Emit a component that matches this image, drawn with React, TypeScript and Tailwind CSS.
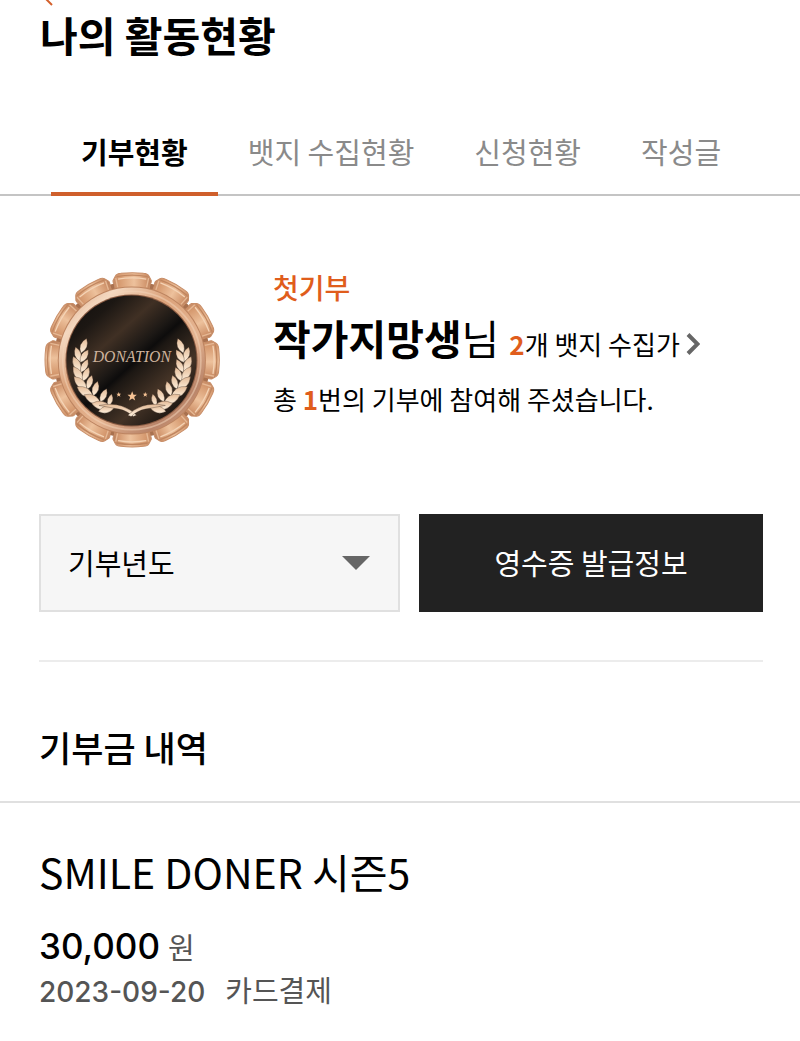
import React from "react";

const LOBES = [0, 30, 60, 90, 120, 150, 180, 210, 240, 270, 300, 330];

type Leaf = [number, number, number, number];

/* base x, base y, tip x, tip y */
const LEAVES: Leaf[] = [
  [154, 280, 171, 236],
  [152, 306, 138, 262],
  [152, 308, 176, 270],
  [153, 336, 131, 290],
  [154, 338, 175, 298],
  [160, 364, 131, 320],
  [160, 364, 178, 322],
  [173, 390, 133, 350],
  [173, 388, 187, 346],
  [192, 411, 142, 380],
  [191, 408, 204, 364],
  [214, 430, 164, 404],
  [212, 426, 231, 386],
  [244, 442, 186, 430],
  [236, 438, 246, 402],
  [254, 442, 206, 454],
];

function LeafShape({ leaf }: { leaf: Leaf }) {
  const [bx, by, tx, ty] = leaf;
  const dx = tx - bx;
  const dy = ty - by;
  const nx = -dy * 0.42;
  const ny = dx * 0.42;
  const mx = bx + dx * 0.5;
  const my = by + dy * 0.5;
  return <path d={`M${bx} ${by} Q${mx + nx} ${my + ny} ${tx} ${ty} Q${mx - nx} ${my - ny} ${bx} ${by}Z`} />;
}

function Laurel() {
  return (
    <g fill="url(#leaf)" stroke="#3a2b20" strokeWidth="1">
      {LEAVES.map((leaf, i) => (
        <LeafShape key={i} leaf={leaf} />
      ))}
      <path d="M208 436 Q250 428 276 438 Q302 447 320 465 L310 469 Q292 452 268 447 Q240 442 208 436Z" />
    </g>
  );
}

function DonationBadge() {
  return (
    <svg viewBox="44 38 525 525" className="size-44 shrink-0" role="img" aria-label="DONATION">
      <defs>
        <linearGradient id="lobe" x1="0" y1="0" x2="1" y2="0">
          <stop offset="0" stopColor="#c58b66" />
          <stop offset="0.16" stopColor="#d69a70" />
          <stop offset="0.55" stopColor="#edc19c" />
          <stop offset="0.85" stopColor="#d39870" />
          <stop offset="1" stopColor="#b97f5c" />
        </linearGradient>
        <linearGradient id="ring" x1="0" y1="0" x2="0.9" y2="1">
          <stop offset="0" stopColor="#d79c76" />
          <stop offset="0.2" stopColor="#f4d8c0" />
          <stop offset="0.4" stopColor="#dba27a" />
          <stop offset="0.65" stopColor="#e5b491" />
          <stop offset="0.85" stopColor="#b98469" />
          <stop offset="1" stopColor="#d9a582" />
        </linearGradient>
        <linearGradient id="disc" x1="0.1" y1="0.1" x2="0.85" y2="0.95">
          <stop offset="0" stopColor="#16120f" />
          <stop offset="0.12" stopColor="#1c1713" />
          <stop offset="0.3" stopColor="#403024" />
          <stop offset="0.46" stopColor="#1c1815" />
          <stop offset="0.52" stopColor="#0d0c0c" />
          <stop offset="0.56" stopColor="#1c1713" />
          <stop offset="0.76" stopColor="#443326" />
          <stop offset="1" stopColor="#15110f" />
        </linearGradient>
        <linearGradient id="leaf" x1="0" y1="0" x2="0" y2="1">
          <stop offset="0" stopColor="#e4bb97" />
          <stop offset="1" stopColor="#fff1de" />
        </linearGradient>
      </defs>
      <circle cx="307" cy="300" r="234" fill="#a9714f" />
      <g transform="translate(307 300)">
        {LOBES.map((angle) => (
          <g key={angle} transform={`rotate(${angle})`}>
            <path
              d="M-50 -250 Q-46 -257 -34 -258 Q0 -262 34 -258 Q46 -257 50 -250 L57 -237 Q58 -230 53 -224 L49 -200 L-49 -200 L-53 -224 Q-58 -230 -57 -237Z"
              fill="url(#lobe)"
              stroke="#c88e68"
              strokeWidth="3"
              strokeLinejoin="round"
            />
            <path d="M-46 -248 Q0 -257 46 -248" fill="none" stroke="#c08660" strokeWidth="4" />
            <path d="M-42 -241 Q0 -248 42 -241" fill="none" stroke="#f4d3b5" strokeWidth="4" />
            <path d="M-49 -244 L-43 -216 M49 -244 L43 -216" stroke="#e6b894" strokeWidth="4" />
          </g>
        ))}
      </g>
      <circle cx="306" cy="302" r="221" fill="#bd8460" />
      <circle cx="306" cy="302" r="218" fill="url(#ring)" />
      <circle cx="306" cy="302" r="206" fill="none" stroke="#f3d5bc" strokeWidth="5" opacity="0.5" />
      <circle cx="305" cy="302" r="197" fill="#8a5b42" />
      <circle cx="305" cy="302" r="194" fill="url(#disc)" />
      <Laurel />
      <g transform="translate(614 0) scale(-1 1)">
        <Laurel />
      </g>
      <text
        x="306"
        y="307"
        textAnchor="middle"
        fill="#cdb29c"
        className="font-['Liberation_Serif',serif] text-[47px] italic"
      >
        DONATION
      </text>
      <path d="M307 394 L311 404 L321 404 L313 411 L316 421 L307 415 L298 421 L301 411 L293 404 L303 404Z" fill="#f5c294" />
      <path
        d="M267 396l2 5 5 0-4 4 2 5-5-3-5 3 2-5-4-4 5 0ZM346 396l2 5 5 0-4 4 2 5-5-3-5 3 2-5-4-4 5 0Z"
        fill="#f5c294"
      />
    </svg>
  );
}

const TABS = ["기부현황", "뱃지 수집현황", "신청현황", "작성글"];

export default function App() {
  const [active, setActive] = React.useState(0);

  return (
    <div className="min-h-screen bg-white pb-7 font-['Noto_Sans_CJK_KR',sans-serif] text-black">
      <header className="pl-10">
        <a href="#back" aria-label="뒤로" className="block h-2.5 w-6">
          <svg viewBox="0 0 24 10" className="h-2.5 w-6" fill="none" stroke="#d4602c" strokeWidth="2">
            <path d="M5 -2 L12 5" />
          </svg>
        </a>
        <h1 className="text-[41px] leading-12 font-bold">나의 활동현황</h1>
      </header>

      <nav className="mt-[58px] flex border-b-2 border-[#c4c4c4] pl-[51px]" role="tablist">
        {TABS.map((tab, i) => (
          <button
            key={tab}
            type="button"
            role="tab"
            aria-selected={i === active}
            onClick={() => setActive(i)}
            className={
              i === active
                ? "-mb-0.5 border-b-4 border-[#cf5f2b] px-[30px] pt-[13px] pb-[19px] text-[29px] leading-11 font-bold"
                : "-mb-0.5 border-b-4 border-transparent px-[30px] pt-[13px] pb-[19px] text-[29px] leading-11 text-[#8a8a8a]"
            }
          >
            {tab}
          </button>
        ))}
      </nav>

      <main>
        <div className="pr-[37px] pl-[39px]">
          <section className="flex items-center gap-[53px] pt-[73px] pl-[5px]">
            <DonationBadge />
            <div className="pb-8">
              <p className="text-[28px] leading-9 font-medium text-[#e05d1c]">첫기부</p>
              <div className="mt-1 flex items-baseline gap-2.5">
                <p className="text-[41px] leading-14">
                  <strong className="font-bold">작가지망생</strong>님
                </p>
                <a href="#badges" className="flex items-center gap-1.5 text-[26px] leading-9">
                  <span>
                    <b className="text-[#e05d1c]">2</b>개 뱃지 수집가
                  </span>
                  <svg viewBox="0 0 14 22" className="h-[22px] w-3.5" fill="none" stroke="#666" strokeWidth="4">
                    <path d="M2 1.5 L11.5 11 L2 20.5" />
                  </svg>
                </a>
              </div>
              <p className="mt-3.5 text-[26px] leading-10">
                총 <b className="text-[#e05d1c]">1</b>번의 기부에 참여해 주셨습니다.
              </p>
            </div>
          </section>

          <div className="mt-[63px] flex gap-[19px] border-b-2 border-[#ececec] pb-12">
            <div className="relative flex-[21]">
              <select
                aria-label="기부년도"
                className="h-[98px] w-full appearance-none rounded-none border-2 border-[#e0e0e0] bg-[#f6f6f6] px-[27px] text-[29px]"
              >
                <option>기부년도</option>
              </select>
              <svg
                viewBox="0 0 28 14"
                className="pointer-events-none absolute top-[42px] right-[30px] h-3.5 w-7"
                fill="#666"
              >
                <path d="M0 0H28L14 14Z" />
              </svg>
            </div>
            <button type="button" className="h-[98px] flex-[20] bg-[#222] text-[29px] text-white">
              영수증 발급정보
            </button>
          </div>
        </div>

        <section>
          <h2 className="border-b-2 border-[#e0e0e0] pt-[59px] pb-7 pl-[39px] text-[35px] leading-[52px] font-medium">
            기부금 내역
          </h2>
          <article className="pt-10 pl-[39px]">
            <h3 className="text-[41px] leading-14">SMILE DONER 시즌5</h3>
            <p className="mt-[26px] flex items-baseline gap-2 text-[29px] leading-[42px] text-[#555]">
              <span className="font-[Inter,sans-serif] text-[35px] font-medium text-black">30,000</span>
              <span>원</span>
            </p>
            <p className="flex items-baseline gap-5 text-[29px] leading-[44px] text-[#555]">
              <time className="font-[Inter,sans-serif] text-[28px] font-medium">2023-09-20</time>
              <span>카드결제</span>
            </p>
          </article>
        </section>
      </main>
    </div>
  );
}
